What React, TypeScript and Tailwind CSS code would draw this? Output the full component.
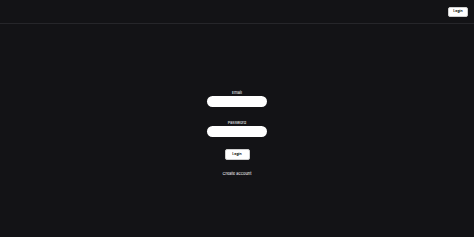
export default function App() {
  return (
    <div className="min-h-[237px] w-full bg-[#131316] text-white font-['Inter','Liberation_Sans',sans-serif]">
      <header className="flex h-[24px] items-center justify-end border-b border-[#26262a] pr-[6px]">
        <button className="h-[10px] w-[20px] rounded-[2px] border-[0.5px] border-[#cfcfcf] bg-white text-[3.5px] font-semibold leading-none text-black">
          Login
        </button>
      </header>

      <main className="flex flex-col items-center pt-[67px]">
        <label className="text-[4px] leading-[4px] text-white">Email</label>
        <input
          type="email"
          className="mt-[1px] h-[11px] w-[60px] rounded-full bg-white outline-none"
        />
        <label className="mt-[14px] text-[4px] leading-[4px] text-white">Password</label>
        <input
          type="password"
          className="mt-[1px] h-[11px] w-[60px] rounded-full bg-white outline-none"
        />
        <button className="mt-[12px] h-[11px] w-[25px] rounded-[2px] border-[0.5px] border-[#cfcfcf] bg-white text-[3.5px] font-semibold leading-none text-black">
          Login
        </button>
        <a className="mt-[12px] text-[4px] leading-[4px] text-white">Create account</a>
      </main>
    </div>
  );
}
